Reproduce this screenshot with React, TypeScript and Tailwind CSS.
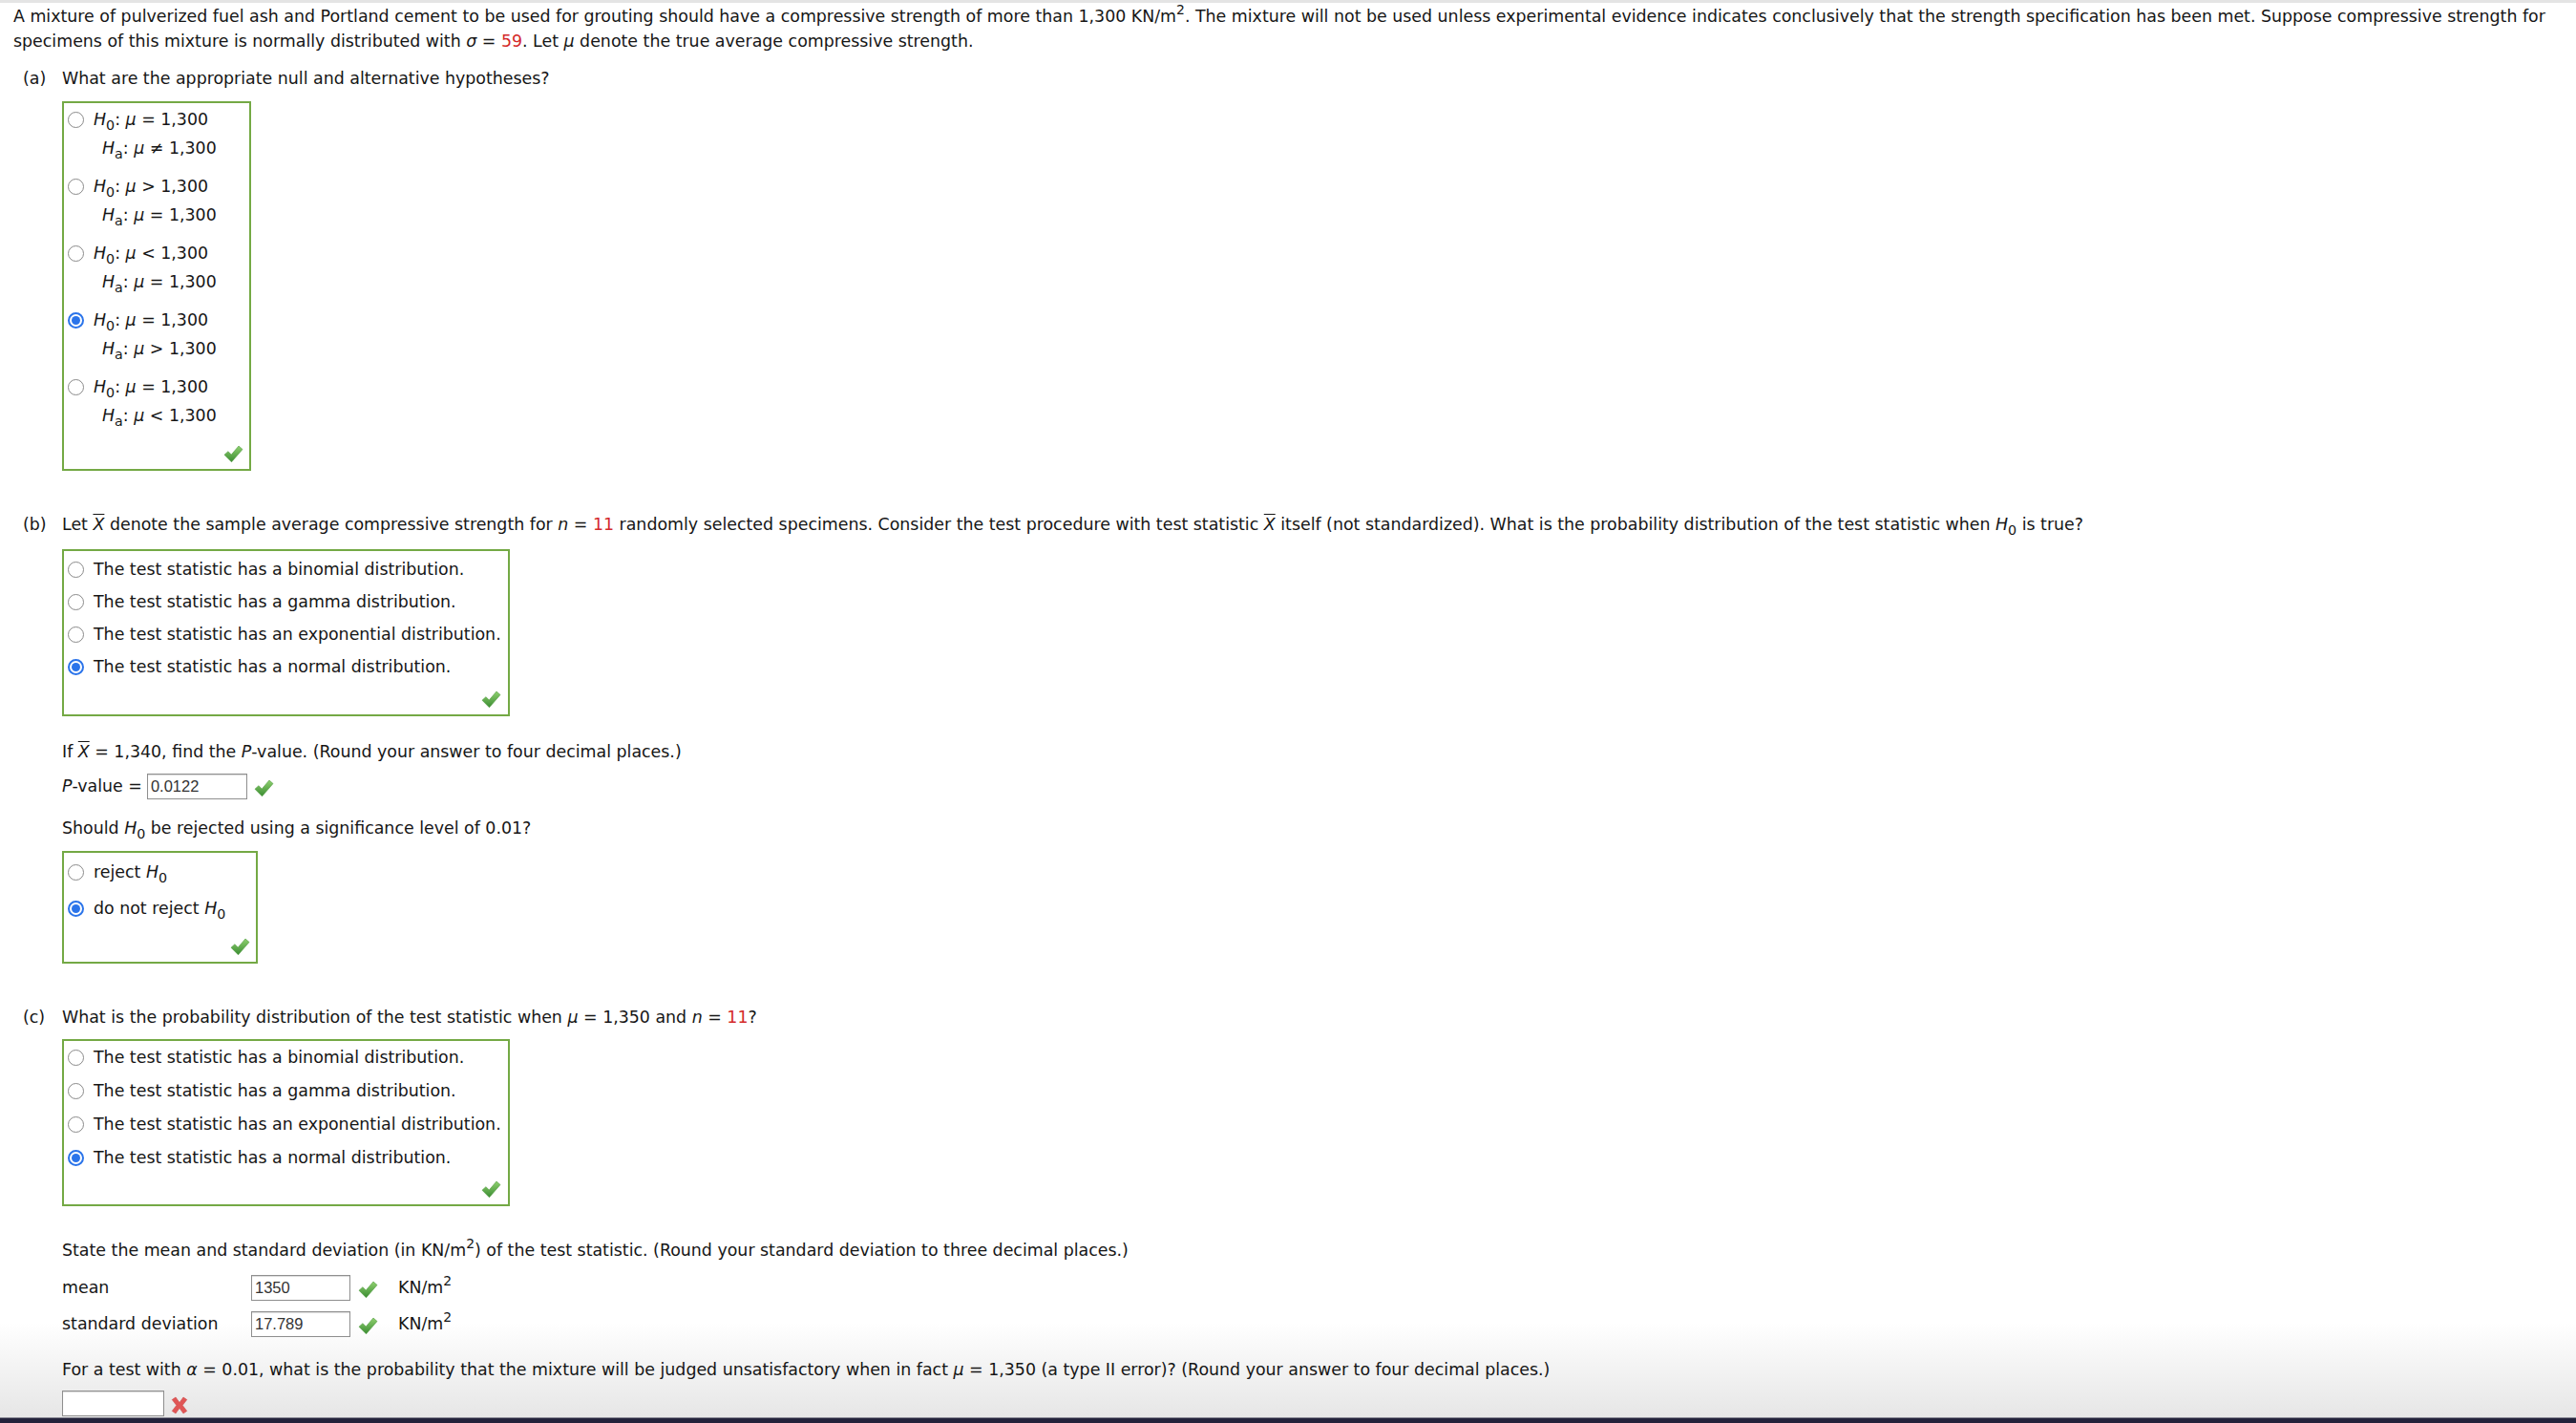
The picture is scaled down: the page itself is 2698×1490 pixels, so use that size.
import { useId, type ReactNode } from 'react';

function Radio({ checked = false }: { checked?: boolean }) {
  if (checked) {
    return (
      <span className="w-[17px] h-[17px] rounded-full border-2 border-[#2b74ea] bg-white flex items-center justify-center shrink-0">
        <span className="w-[9px] h-[9px] rounded-full bg-[#2b74ea]" />
      </span>
    );
  }
  return <span className="w-[17px] h-[17px] rounded-full border-[1.5px] border-[#8a8a8a] bg-white shrink-0" />;
}

function Check() {
  const id = useId();
  return (
    <svg width="21" height="19" viewBox="0 0 21 19" className="shrink-0">
      <defs>
        <linearGradient id={id} x1="0" y1="0" x2="0" y2="1">
          <stop offset="0" stopColor="#8fd06f" />
          <stop offset="1" stopColor="#3a8c32" />
        </linearGradient>
      </defs>
      <path
        d="M1 10.2 L4.9 6.7 L8.3 10 L16 1 L20 4.5 L8.5 17.8 Z"
        fill={`url(#${id})`}
        stroke="#4f9a3e"
        strokeWidth="0.6"
        strokeLinejoin="round"
      />
    </svg>
  );
}

function Cross() {
  return (
    <svg width="18" height="19" viewBox="0 0 18 19" className="shrink-0">
      <path
        d="M1.2 3.6 L5 1 L9 6.6 L13 1 L16.8 3.6 L12.2 9.5 L16.8 15.4 L13 18 L9 12.4 L5 18 L1.2 15.4 L5.8 9.5 Z"
        fill="#e05656"
        stroke="#c94343"
        strokeWidth="0.5"
        strokeLinejoin="round"
      />
    </svg>
  );
}

const Red = ({ children }: { children: ReactNode }) => <span className="text-[#d42a2a]">{children}</span>;
const Xbar = () => <i className="overline">X</i>;
const Sup = ({ children }: { children: ReactNode }) => <sup className="text-[80%] top-[-0.55em]">{children}</sup>;
const H = ({ s }: { s: string }) => (
  <>
    <i>H</i>
    <sub className="text-[82%] bottom-[-0.32em]">{s}</sub>
  </>
);

function Section({ label, children }: { label: string; children: ReactNode }) {
  return (
    <div className="flex pl-[10px]">
      <div className="w-[41px] leading-[26px] shrink-0">{label}</div>
      <div className="flex-1">{children}</div>
    </div>
  );
}

function Box({ children, className = '' }: { children: ReactNode; className?: string }) {
  return <div className={`border-2 border-[#74a945] ${className}`}>{children}</div>;
}

function TextInput({ value, w }: { value: string; w: string }) {
  return (
    <input
      readOnly
      value={value}
      className={`${w} h-[27px] border border-[#8f8f8f] shadow-[inset_0_1px_1px_rgba(0,0,0,0.15)] pl-[3px] text-[16.5px] text-[#333] font-['Liberation_Sans',sans-serif] bg-white outline-none`}
    />
  );
}

const hyps: [string, string][] = [
  ['=', '≠'],
  ['>', '='],
  ['<', '='],
  ['=', '>'],
  ['=', '<'],
];

const dists = [
  'The test statistic has a binomial distribution.',
  'The test statistic has a gamma distribution.',
  'The test statistic has an exponential distribution.',
  'The test statistic has a normal distribution.',
];

function DistBox({ rowH, pt, mt }: { rowH: string; pt: string; mt: string }) {
  return (
    <Box className={`w-fit pl-[4px] pr-[7px] pb-[6px] ${pt}`}>
      {dists.map((d, i) => (
        <div key={d} className={`flex items-center gap-[10px] ${rowH}`}>
          <Radio checked={i === 3} />
          <span>{d}</span>
        </div>
      ))}
      <div className={`flex justify-end ${mt}`}>
        <Check />
      </div>
    </Box>
  );
}

export default function App() {
  return (
    <div className="h-[1490px] overflow-hidden text-[17.4px] text-[#161616] font-['DejaVu_Sans',sans-serif] bg-[linear-gradient(to_bottom,#ffffff_0px,#ffffff_1385px,#e6e6e6_1484px,#23223b_1485px,#23223b_1490px)]">
      <div className="h-[3px] bg-[#e4e4e4]" />
      <div className="px-[14px] pt-[1px]">
        <p className="leading-[26px]">
          A mixture of pulverized fuel ash and Portland cement to be used for grouting should have a compressive strength of more
          than 1,300 KN/m<Sup>2</Sup>. The mixture will not be used unless experimental evidence indicates conclusively that the
          strength specification has been met. Suppose compressive strength for specimens of this mixture is normally distributed
          with <i>σ</i> = <Red>59</Red>. Let <i>μ</i> denote the true average compressive strength.
        </p>

        {/* (a) */}
        <div className="mt-[13px]">
          <Section label="(a)">
            <div className="leading-[26px]">What are the appropriate null and alternative hypotheses?</div>
            <Box className="mt-[11px] w-[198px] pt-[2px] pl-[4px] pr-[6px] pb-[6px]">
              <div className="flex flex-col gap-[10px]">
                {hyps.map(([a, b], i) => (
                  <div key={i} className="flex gap-[10px]">
                    <div className="h-[30px] flex items-center">
                      <Radio checked={i === 3} />
                    </div>
                    <div>
                      <div className="h-[30px] leading-[30px] whitespace-nowrap">
                        <H s="0" />: <i>μ</i> {a} 1,300
                      </div>
                      <div className="h-[30px] leading-[30px] pl-[9px] whitespace-nowrap">
                        <H s="a" />: <i>μ</i> {b} 1,300
                      </div>
                    </div>
                  </div>
                ))}
              </div>
              <div className="flex justify-end mt-[16px]">
                <Check />
              </div>
            </Box>
          </Section>
        </div>

        {/* (b) */}
        <div className="mt-[43px]">
          <Section label="(b)">
            <div className="leading-[26px] whitespace-nowrap">
              Let <Xbar /> denote the sample average compressive strength for <i>n</i> = <Red>11</Red> randomly selected specimens.
              Consider the test procedure with test statistic <Xbar /> itself (not standardized). What is the probability
              distribution of the test statistic when <H s="0" /> is true?
            </div>
            <div className="mt-[13px]">
              <DistBox rowH="h-[34px]" pt="pt-[2px]" mt="mt-[8px]" />
            </div>

            <div className="mt-[24px] leading-[26px]">
              If <Xbar /> = 1,340, find the <i>P</i>-value. (Round your answer to four decimal places.)
            </div>
            <div className="mt-[9px] h-[28px] flex items-center">
              <span>
                <i>P</i>-value =
              </span>
              <span className="ml-[5px] flex">
                <TextInput value="0.0122" w="w-[105px]" />
              </span>
              <span className="ml-[7px] mt-[4px]">
                <Check />
              </span>
            </div>

            <div className="mt-[17px] leading-[26px]">
              Should <H s="0" /> be rejected using a significance level of 0.01?
            </div>
            <Box className="mt-[11px] w-[205px] pt-[1px] pl-[4px] pr-[6px] pb-[6px]">
              <div className="h-[38px] flex items-center gap-[10px]">
                <Radio />
                <span>
                  reject <H s="0" />
                </span>
              </div>
              <div className="h-[38px] flex items-center gap-[10px]">
                <Radio checked />
                <span>
                  do not reject <H s="0" />
                </span>
              </div>
              <div className="flex justify-end mt-[12px]">
                <Check />
              </div>
            </Box>
          </Section>
        </div>

        {/* (c) */}
        <div className="mt-[43px]">
          <Section label="(c)">
            <div className="leading-[26px]">
              What is the probability distribution of the test statistic when <i>μ</i> = 1,350 and <i>n</i> = <Red>11</Red>?
            </div>
            <div className="mt-[10px]">
              <DistBox rowH="h-[35px]" pt="pt-0" mt="mt-[6px]" />
            </div>

            <div className="mt-[33px] leading-[26px]">
              State the mean and standard deviation (in KN/m<Sup>2</Sup>) of the test statistic. (Round your standard deviation to
              three decimal places.)
            </div>
            <div className="mt-[11px] h-[30px] flex items-center">
              <span className="w-[198px]">mean</span>
              <TextInput value="1350" w="w-[104px]" />
              <span className="ml-[8px] mt-[4px]">
                <Check />
              </span>
              <span className="ml-[21px]">
                KN/m<Sup>2</Sup>
              </span>
            </div>
            <div className="mt-[8px] h-[30px] flex items-center">
              <span className="w-[198px]">standard deviation</span>
              <TextInput value="17.789" w="w-[104px]" />
              <span className="ml-[8px] mt-[4px]">
                <Check />
              </span>
              <span className="ml-[21px]">
                KN/m<Sup>2</Sup>
              </span>
            </div>

            <div className="mt-[20px] leading-[26px]">
              For a test with <i>α</i> = 0.01, what is the probability that the mixture will be judged unsatisfactory when in fact{' '}
              <i>μ</i> = 1,350 (a type II error)? (Round your answer to four decimal places.)
            </div>
            <div className="mt-[9px] flex items-center">
              <TextInput value="" w="w-[107px]" />
              <span className="ml-[7px] mt-[3px]">
                <Cross />
              </span>
            </div>
          </Section>
        </div>
      </div>
    </div>
  );
}
